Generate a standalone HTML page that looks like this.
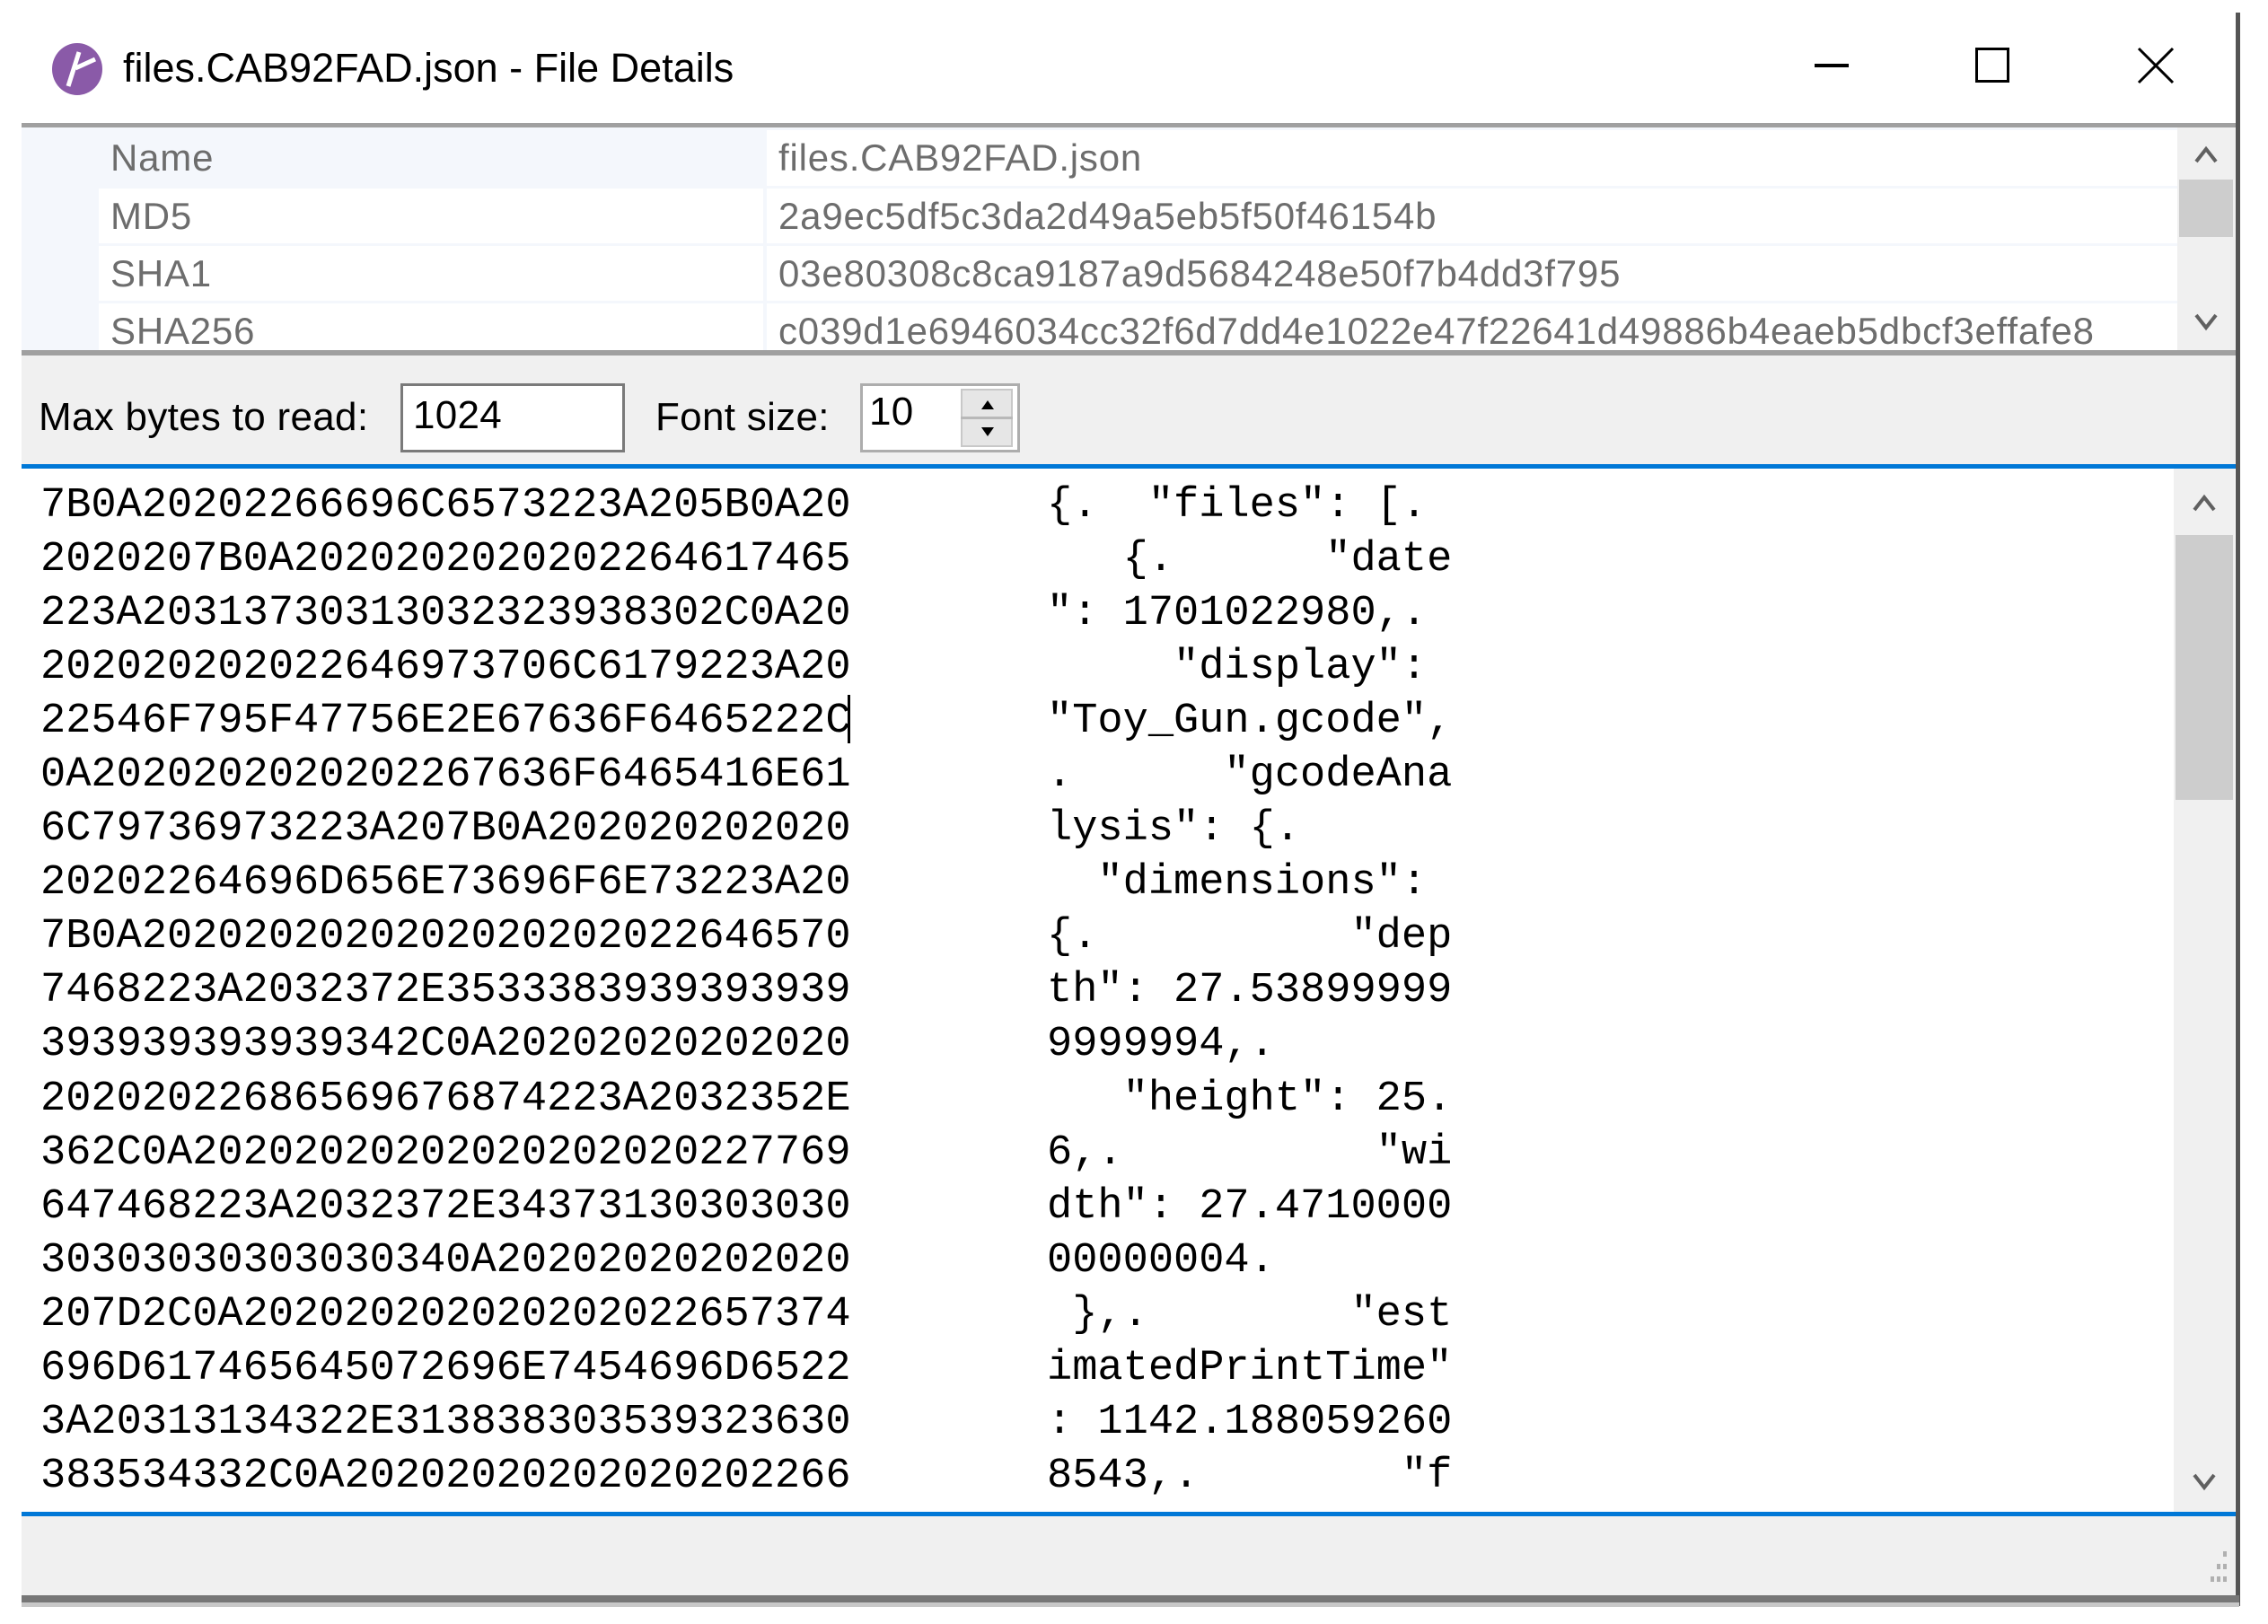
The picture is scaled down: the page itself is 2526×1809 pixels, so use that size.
<!DOCTYPE html>
<html><head><meta charset="utf-8"><style>
*{margin:0;padding:0;box-sizing:border-box}
body{width:2526px;height:1809px;background:#fff;position:relative;overflow:hidden;font-family:"Liberation Sans",sans-serif}
.a{position:absolute}
.title{left:137px;top:50px;font-size:45px;color:#000;white-space:nowrap}
.grid{left:24px;top:142px;width:2401px;height:251px;background:#f4f7fc}
.cell{position:absolute;background:#fff;color:#6d6d6d;font-size:42px;line-height:62px;padding-left:13px;white-space:nowrap;overflow:hidden;letter-spacing:0.8px}
.lbl{font-size:44px;color:#000;white-space:nowrap;letter-spacing:0.3px}
.mono{font-family:"Liberation Mono",monospace;font-size:47px;color:#000;white-space:pre;line-height:60.05px;font-weight:normal}
</style></head><body>
<svg class="a" style="left:54px;top:46px" width="64" height="62" viewBox="0 0 64 62">
<ellipse cx="32" cy="31" rx="28" ry="29" fill="#8a5aa8"/>
<path d="M22 50 L34 12 M30 30 L52 20" stroke="#fff" stroke-width="5" fill="none"/>
</svg>
<div class="a title">files.CAB92FAD.json - File Details</div>
<div class="a" style="left:2021px;top:71px;width:38px;height:4px;background:#000"></div>
<div class="a" style="left:2200px;top:53px;width:38px;height:39px;border:3px solid #000"></div>
<svg class="a" style="left:2380px;top:52px" width="42" height="42"><path d="M2 2L40 40M40 2L2 40" stroke="#000" stroke-width="3"/></svg>
<div class="a" style="left:2490px;top:14px;width:5px;height:1775px;background:#555"></div>
<div class="a" style="left:24px;top:137px;width:2466px;height:5px;background:#a0a0a0"></div>
<div class="a grid">
 <div class="cell" style="left:86px;top:3px;width:740px;height:62px;background:#f4f7fc">Name</div>
 <div class="cell" style="left:830px;top:3px;width:1571px;height:62px">files.CAB92FAD.json</div>
 <div class="cell" style="left:86px;top:68px;width:740px;height:61px">MD5</div>
 <div class="cell" style="left:830px;top:68px;width:1571px;height:61px">2a9ec5df5c3da2d49a5eb5f50f46154b</div>
 <div class="cell" style="left:86px;top:132px;width:740px;height:61px">SHA1</div>
 <div class="cell" style="left:830px;top:132px;width:1571px;height:61px">03e80308c8ca9187a9d5684248e50f7b4dd3f795</div>
 <div class="cell" style="left:86px;top:196px;width:740px;height:55px;line-height:62px">SHA256</div>
 <div class="cell" style="left:830px;top:196px;width:1571px;height:55px;line-height:62px">c039d1e6946034cc32f6d7dd4e1022e47f22641d49886b4eaeb5dbcf3effafe8</div>
</div>
<div class="a" style="left:2425px;top:142px;width:65px;height:251px;background:#f0f0f0"></div>
<div class="a" style="left:2427px;top:200px;width:60px;height:64px;background:#cdcdcd"></div>
<svg class="a" style="left:2440px;top:160px" width="34" height="26"><path d="M6 20L17 6L28 20" stroke="#606060" stroke-width="4" fill="none"/></svg>
<svg class="a" style="left:2440px;top:345px" width="34" height="26"><path d="M6 6L17 20L28 6" stroke="#606060" stroke-width="4" fill="none"/></svg>
<div class="a" style="left:24px;top:390px;width:2466px;height:6px;background:#a0a0a0"></div>
<div class="a" style="left:24px;top:396px;width:2466px;height:123px;background:#f0f0f0"></div>
<div class="a lbl" style="left:43px;top:440px">Max bytes to read:</div>
<div class="a" style="left:446px;top:427px;width:250px;height:77px;background:#fff;border:3px solid #7a7a7a"></div>
<div class="a lbl" style="left:460px;top:438px">1024</div>
<div class="a lbl" style="left:730px;top:440px">Font size:</div>
<div class="a" style="left:958px;top:427px;width:178px;height:77px;background:#fff;border:3px solid #adadad"></div>
<div class="a lbl" style="left:968px;top:434px">10</div>
<div class="a" style="left:1070px;top:433px;width:58px;height:65px;background:#e6e6e6;border:2px solid #c8c8c8"></div>
<div class="a" style="left:1070px;top:464px;width:58px;height:3px;background:#b8b8b8"></div>
<svg class="a" style="left:1088px;top:440px" width="24" height="55"><path d="M5 16L12 6L19 16Z M5 36L12 46L19 36Z" fill="#000"/></svg>
<div class="a" style="left:24px;top:517px;width:2466px;height:5px;background:#0078d7"></div>
<div class="a" style="left:2421px;top:522px;width:68px;height:1165px;background:#f0f0f0"></div>
<div class="a" style="left:2423px;top:596px;width:64px;height:295px;background:#cdcdcd"></div>
<svg class="a" style="left:2438px;top:548px" width="34" height="26"><path d="M6 20L17 6L28 20" stroke="#606060" stroke-width="4" fill="none"/></svg>
<svg class="a" style="left:2438px;top:1637px" width="34" height="26"><path d="M6 6L17 20L28 6" stroke="#606060" stroke-width="4" fill="none"/></svg>
<div class="a mono" style="left:45px;top:534px">7B0A20202266696C6573223A205B0A20
2020207B0A2020202020202264617465
223A20313730313032323938302C0A20
202020202022646973706C6179223A20
22546F795F47756E2E67636F6465222C
0A2020202020202267636F6465416E61
6C79736973223A207B0A202020202020
20202264696D656E73696F6E73223A20
7B0A2020202020202020202022646570
7468223A2032372E3533383939393939
393939393939342C0A20202020202020
20202022686569676874223A2032352E
362C0A20202020202020202020227769
647468223A2032372E34373130303030
30303030303030340A20202020202020
207D2C0A202020202020202022657374
696D617465645072696E7454696D6522
3A20313134322E313838303539323630
383534332C0A20202020202020202266</div>
<div class="a" style="left:944px;top:774px;width:3px;height:54px;background:#000"></div>
<div class="a mono" style="left:1166px;top:534px">{.  "files": [. 
   {.      "date
": 1701022980,. 
     "display": 
"Toy_Gun.gcode",
.      "gcodeAna
lysis": {.      
  "dimensions": 
{.          "dep
th": 27.53899999
9999994,.       
   "height": 25.
6,.          "wi
dth": 27.4710000
00000004.       
 },.        "est
imatedPrintTime"
: 1142.188059260
8543,.        "f</div>
<div class="a" style="left:24px;top:1684px;width:2466px;height:5px;background:#0078d7"></div>
<div class="a" style="left:24px;top:1689px;width:2466px;height:88px;background:#f0f0f0"></div>
<svg class="a" style="left:2455px;top:1720px" width="30" height="50" fill="#b0b0b0"><rect x="21" y="8" width="4" height="6"/><rect x="14" y="22" width="4" height="6"/><rect x="21" y="22" width="4" height="6"/><rect x="7" y="36" width="4" height="6"/><rect x="14" y="36" width="4" height="6"/><rect x="21" y="36" width="4" height="6"/></svg>
<div class="a" style="left:24px;top:1777px;width:2470px;height:8px;background:#777"></div>
<div class="a" style="left:24px;top:1785px;width:2470px;height:5px;background:#c8c8c8"></div>
</body></html>
